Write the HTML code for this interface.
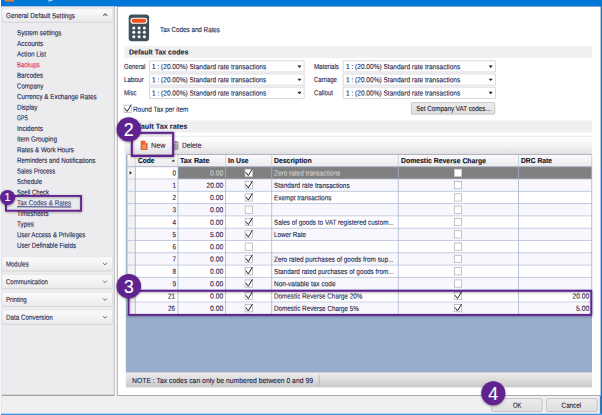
<!DOCTYPE html><html><head><meta charset="utf-8"><title>Settings</title><style>html,body{margin:0;padding:0;background:#fff;}
body{width:602px;height:415px;overflow:hidden;position:relative;font-family:"Liberation Sans",sans-serif;color:#202044;}
svg{position:absolute;left:0;top:0;}
span{position:absolute;white-space:nowrap;line-height:10px;height:10px;font-size:7.3px;-webkit-text-stroke:0.1px;}
.l{transform-origin:0 50%;}.r{transform-origin:100% 50%;}.c{transform-origin:50% 50%;}
.b{font-weight:bold;}</style></head><body>
<svg width="602" height="415" viewBox="0 0 602 415"><defs><linearGradient id="hg" x1="0" y1="0" x2="0" y2="1"><stop offset="0" stop-color="#fbfbfb"/><stop offset="1" stop-color="#eaeaec"/></linearGradient><linearGradient id="bg" x1="0" y1="0" x2="0" y2="1"><stop offset="0" stop-color="#ececec"/><stop offset="1" stop-color="#dedede"/></linearGradient><linearGradient id="tg" x1="0" y1="0" x2="0" y2="1"><stop offset="0" stop-color="#ffffff"/><stop offset="0.5" stop-color="#f4f4f5"/><stop offset="1" stop-color="#dfdfe1"/></linearGradient><linearGradient id="ng" x1="0" y1="0" x2="0" y2="1"><stop offset="0" stop-color="#ededed"/><stop offset="1" stop-color="#c9c9cb"/></linearGradient><linearGradient id="thg" x1="0" y1="0" x2="0" y2="1"><stop offset="0" stop-color="#fbfbfc"/><stop offset="1" stop-color="#ebebee"/></linearGradient></defs>
<rect x="1.00" y="0.00" width="601.00" height="415.00" fill="#f0f0f0" />
<rect x="1.00" y="0.00" width="601.00" height="6.90" fill="#0078d7" />
<rect x="1.00" y="6.10" width="601.00" height="0.80" fill="#1668b6" />
<rect x="4.90" y="0.00" width="9.10" height="1.60" fill="#f07a28" />
<rect x="48.60" y="0.00" width="1.20" height="1.60" fill="#e8f0fa" />
<rect x="50.20" y="0.00" width="2.20" height="0.90" fill="#d0e4f8" />
<rect x="1.00" y="6.60" width="1.20" height="407.00" fill="#f6f6f8" />
<line x1="1.20" y1="6.60" x2="1.20" y2="413.40" stroke="#9cc4ee" stroke-width="0.40"/>
<rect x="600.50" y="6.00" width="1.50" height="409.00" fill="#0078d7" />
<line x1="600.35" y1="6.60" x2="600.35" y2="413.40" stroke="#2a5a94" stroke-width="0.80"/>
<rect x="1.00" y="413.70" width="601.00" height="1.30" fill="#3a92e4" />
<rect x="1.70" y="6.30" width="112.40" height="388.70" fill="#ececef" />
<line x1="114.40" y1="6.30" x2="114.40" y2="395.50" stroke="#a4a4a8" stroke-width="0.80"/>
<line x1="1.70" y1="395.40" x2="114.80" y2="395.40" stroke="#a0a0a4" stroke-width="1.20"/>
<rect x="114.80" y="6.30" width="2.20" height="389.70" fill="#fbfbfb" />
<rect x="2.1" y="9.30" width="110.5" height="13.10" rx="1.4" fill="#c4c4ca"/>
<rect x="2.1" y="8.80" width="110.5" height="13.10" rx="1.4" fill="url(#hg)" stroke="#dcdce0" stroke-width="0.5"/>
<path d="M103.2 15.95 l2.1 -2.1 l2.1 2.1" fill="none" stroke="#6a6a80" stroke-width="1.15"/>
<rect x="2.1" y="257.30" width="110.5" height="14.00" rx="1.4" fill="#c4c4ca"/>
<rect x="2.1" y="256.80" width="110.5" height="14.00" rx="1.4" fill="url(#hg)" stroke="#dcdce0" stroke-width="0.5"/>
<path d="M103 262.90 l2 2 l2 -2" fill="none" stroke="#6a6a80" stroke-width="1.0"/>
<rect x="2.1" y="275.05" width="110.5" height="14.00" rx="1.4" fill="#c4c4ca"/>
<rect x="2.1" y="274.55" width="110.5" height="14.00" rx="1.4" fill="url(#hg)" stroke="#dcdce0" stroke-width="0.5"/>
<path d="M103 280.65 l2 2 l2 -2" fill="none" stroke="#6a6a80" stroke-width="1.0"/>
<rect x="2.1" y="292.80" width="110.5" height="14.00" rx="1.4" fill="#c4c4ca"/>
<rect x="2.1" y="292.30" width="110.5" height="14.00" rx="1.4" fill="url(#hg)" stroke="#dcdce0" stroke-width="0.5"/>
<path d="M103 298.40 l2 2 l2 -2" fill="none" stroke="#6a6a80" stroke-width="1.0"/>
<rect x="2.1" y="310.55" width="110.5" height="14.00" rx="1.4" fill="#c4c4ca"/>
<rect x="2.1" y="310.05" width="110.5" height="14.00" rx="1.4" fill="url(#hg)" stroke="#dcdce0" stroke-width="0.5"/>
<path d="M103 316.15 l2 2 l2 -2" fill="none" stroke="#6a6a80" stroke-width="1.0"/>
<rect x="117.40" y="6.60" width="483.20" height="389.00" fill="#ffffff" />
<line x1="117.30" y1="6.30" x2="117.30" y2="395.80" stroke="#98989c" stroke-width="0.80"/>
<line x1="117.00" y1="395.50" x2="600.50" y2="395.50" stroke="#a0a0a4" stroke-width="0.90"/>
<g transform="translate(128.7 14.55)">
<rect x="0" y="0" width="20.4" height="26.7" rx="3.3" fill="#3f505a"/>
<rect x="1.7" y="3.1" width="17" height="6.2" rx="3.1" fill="#fff"/>
<rect x="2.9" y="4.3" width="14.6" height="3.9" rx="1.95" fill="#ee5320"/>
<g fill="#fff"><circle cx="5.1" cy="13.5" r="1.5"/><circle cx="10.4" cy="13.5" r="1.5"/><circle cx="15.7" cy="13.5" r="1.5"/>
<circle cx="5.1" cy="17.8" r="1.5"/><circle cx="10.4" cy="17.8" r="1.5"/><circle cx="15.7" cy="17.8" r="1.5"/>
<circle cx="5.1" cy="22.1" r="1.5"/><circle cx="10.4" cy="22.1" r="1.5"/><circle cx="15.7" cy="22.1" r="1.5"/></g></g>
<rect x="124.50" y="45.90" width="467.50" height="12.20" fill="#f0f0f0" />
<rect x="149.70" y="60.80" width="154.40" height="11.2" fill="#fff" stroke="#c8c8d0" stroke-width="0.7"/>
<path d="M297.40 65.50 h4.2 l-2.1 2.4 z" fill="#202028"/>
<rect x="343.10" y="60.80" width="152.20" height="11.2" fill="#fff" stroke="#c8c8d0" stroke-width="0.7"/>
<path d="M488.60 65.50 h4.2 l-2.1 2.4 z" fill="#202028"/>
<rect x="149.70" y="73.95" width="154.40" height="11.2" fill="#fff" stroke="#c8c8d0" stroke-width="0.7"/>
<path d="M297.40 78.65 h4.2 l-2.1 2.4 z" fill="#202028"/>
<rect x="343.10" y="73.95" width="152.20" height="11.2" fill="#fff" stroke="#c8c8d0" stroke-width="0.7"/>
<path d="M488.60 78.65 h4.2 l-2.1 2.4 z" fill="#202028"/>
<rect x="149.70" y="87.10" width="154.40" height="11.2" fill="#fff" stroke="#c8c8d0" stroke-width="0.7"/>
<path d="M297.40 91.80 h4.2 l-2.1 2.4 z" fill="#202028"/>
<rect x="343.10" y="87.10" width="152.20" height="11.2" fill="#fff" stroke="#c8c8d0" stroke-width="0.7"/>
<path d="M488.60 91.80 h4.2 l-2.1 2.4 z" fill="#202028"/>
<rect x="124.00" y="105.15" width="7.30" height="7.30" fill="#fff" stroke="#b0b0b8" stroke-width="0.75"/>
<path d="M124.65 108.20 l2.5 3.3 l4.1 -6.8" fill="none" stroke="#22223a" stroke-width="1.0"/>
<rect x="411.40" y="102.60" width="83.40" height="11.60" rx="1.3" fill="url(#bg)" stroke="#b4b4ba" stroke-width="0.7"/>
<rect x="124.50" y="120.40" width="467.50" height="12.10" fill="#f0f0f0" />
<rect x="124.5" y="136.3" width="467.5" height="18" fill="url(#tg)"/>
<line x1="124.50" y1="136.30" x2="592.00" y2="136.30" stroke="#dcdce0" stroke-width="0.60"/>
<g transform="translate(140.4 140.6)"><path d="M0.3 0.2 H4.6 L7.2 2.8 V9.3 H0.3 Z" fill="#e8622c"/><path d="M4.6 0.2 V2.8 H7.2 Z" fill="#f9c4a6"/><path d="M1.8 4.6 H5.7 M1.8 6.1 H5.7 M1.8 7.6 H5.7" stroke="#fbd4be" stroke-width="0.6"/></g>
<g transform="translate(172.6 140.6)"><path d="M0.3 1.9 H6.7 V2.9 H0.3 Z M2.3 0.5 H4.7 V1.8 H2.3 Z" fill="#8c8c90"/><path d="M0.9 3.4 H6.1 L5.7 9.3 H1.3 Z" fill="#a4a4a8"/></g>
<rect x="125.80" y="154.50" width="466.20" height="218.20" fill="#97adcb" />
<rect x="127.20" y="154.50" width="464.60" height="12.20" fill="url(#thg)"/>
<path d="M171.6 161.6 h3.4 l-1.7 -2.2 z" fill="#202028"/>
<rect x="127.20" y="166.70" width="8.10" height="12.30" fill="#f3f3f6" />
<rect x="135.30" y="166.70" width="456.50" height="12.30" fill="#ffffff" />
<rect x="178.00" y="166.70" width="413.80" height="12.30" fill="#808080" />
<rect x="245.15" y="169.20" width="7.30" height="7.30" fill="#fff" stroke="#c8c8c8" stroke-width="0.75"/>
<path d="M245.80 172.25 l2.5 3.3 l4.1 -6.8" fill="none" stroke="#22223a" stroke-width="1.0"/>
<rect x="454.35" y="169.20" width="7.30" height="7.30" fill="#fff" stroke="#c8c8c8" stroke-width="0.75"/>
<rect x="127.20" y="179.00" width="8.10" height="12.30" fill="#f3f3f6" />
<rect x="135.30" y="179.00" width="456.50" height="12.30" fill="#f7f7fd" />
<rect x="245.15" y="181.50" width="7.30" height="7.30" fill="#fff" stroke="#b0b0b8" stroke-width="0.75"/>
<path d="M245.80 184.55 l2.5 3.3 l4.1 -6.8" fill="none" stroke="#22223a" stroke-width="1.0"/>
<rect x="454.35" y="181.50" width="7.30" height="7.30" fill="#fff" stroke="#b0b0b8" stroke-width="0.75"/>
<rect x="127.20" y="191.30" width="8.10" height="12.30" fill="#f3f3f6" />
<rect x="135.30" y="191.30" width="456.50" height="12.30" fill="#ffffff" />
<rect x="245.15" y="193.80" width="7.30" height="7.30" fill="#fff" stroke="#b0b0b8" stroke-width="0.75"/>
<path d="M245.80 196.85 l2.5 3.3 l4.1 -6.8" fill="none" stroke="#22223a" stroke-width="1.0"/>
<rect x="454.35" y="193.80" width="7.30" height="7.30" fill="#fff" stroke="#b0b0b8" stroke-width="0.75"/>
<rect x="127.20" y="203.60" width="8.10" height="12.30" fill="#f3f3f6" />
<rect x="135.30" y="203.60" width="456.50" height="12.30" fill="#f7f7fd" />
<rect x="245.15" y="206.10" width="7.30" height="7.30" fill="#fff" stroke="#b0b0b8" stroke-width="0.75"/>
<rect x="454.35" y="206.10" width="7.30" height="7.30" fill="#fff" stroke="#b0b0b8" stroke-width="0.75"/>
<rect x="127.20" y="215.90" width="8.10" height="12.30" fill="#f3f3f6" />
<rect x="135.30" y="215.90" width="456.50" height="12.30" fill="#ffffff" />
<rect x="245.15" y="218.40" width="7.30" height="7.30" fill="#fff" stroke="#b0b0b8" stroke-width="0.75"/>
<path d="M245.80 221.45 l2.5 3.3 l4.1 -6.8" fill="none" stroke="#22223a" stroke-width="1.0"/>
<rect x="454.35" y="218.40" width="7.30" height="7.30" fill="#fff" stroke="#b0b0b8" stroke-width="0.75"/>
<rect x="127.20" y="228.20" width="8.10" height="12.30" fill="#f3f3f6" />
<rect x="135.30" y="228.20" width="456.50" height="12.30" fill="#f7f7fd" />
<rect x="245.15" y="230.70" width="7.30" height="7.30" fill="#fff" stroke="#b0b0b8" stroke-width="0.75"/>
<path d="M245.80 233.75 l2.5 3.3 l4.1 -6.8" fill="none" stroke="#22223a" stroke-width="1.0"/>
<rect x="454.35" y="230.70" width="7.30" height="7.30" fill="#fff" stroke="#b0b0b8" stroke-width="0.75"/>
<rect x="127.20" y="240.50" width="8.10" height="12.30" fill="#f3f3f6" />
<rect x="135.30" y="240.50" width="456.50" height="12.30" fill="#ffffff" />
<rect x="245.15" y="243.00" width="7.30" height="7.30" fill="#fff" stroke="#b0b0b8" stroke-width="0.75"/>
<rect x="454.35" y="243.00" width="7.30" height="7.30" fill="#fff" stroke="#b0b0b8" stroke-width="0.75"/>
<rect x="127.20" y="252.80" width="8.10" height="12.30" fill="#f3f3f6" />
<rect x="135.30" y="252.80" width="456.50" height="12.30" fill="#f7f7fd" />
<rect x="245.15" y="255.30" width="7.30" height="7.30" fill="#fff" stroke="#b0b0b8" stroke-width="0.75"/>
<path d="M245.80 258.35 l2.5 3.3 l4.1 -6.8" fill="none" stroke="#22223a" stroke-width="1.0"/>
<rect x="454.35" y="255.30" width="7.30" height="7.30" fill="#fff" stroke="#b0b0b8" stroke-width="0.75"/>
<rect x="127.20" y="265.10" width="8.10" height="12.30" fill="#f3f3f6" />
<rect x="135.30" y="265.10" width="456.50" height="12.30" fill="#ffffff" />
<rect x="245.15" y="267.60" width="7.30" height="7.30" fill="#fff" stroke="#b0b0b8" stroke-width="0.75"/>
<path d="M245.80 270.65 l2.5 3.3 l4.1 -6.8" fill="none" stroke="#22223a" stroke-width="1.0"/>
<rect x="454.35" y="267.60" width="7.30" height="7.30" fill="#fff" stroke="#b0b0b8" stroke-width="0.75"/>
<rect x="127.20" y="277.40" width="8.10" height="12.30" fill="#f3f3f6" />
<rect x="135.30" y="277.40" width="456.50" height="12.30" fill="#f7f7fd" />
<rect x="245.15" y="279.90" width="7.30" height="7.30" fill="#fff" stroke="#b0b0b8" stroke-width="0.75"/>
<path d="M245.80 282.95 l2.5 3.3 l4.1 -6.8" fill="none" stroke="#22223a" stroke-width="1.0"/>
<rect x="454.35" y="279.90" width="7.30" height="7.30" fill="#fff" stroke="#b0b0b8" stroke-width="0.75"/>
<rect x="127.20" y="289.70" width="8.10" height="12.30" fill="#f3f3f6" />
<rect x="135.30" y="289.70" width="456.50" height="12.30" fill="#ffffff" />
<rect x="245.15" y="292.20" width="7.30" height="7.30" fill="#fff" stroke="#b0b0b8" stroke-width="0.75"/>
<path d="M245.80 295.25 l2.5 3.3 l4.1 -6.8" fill="none" stroke="#22223a" stroke-width="1.0"/>
<rect x="454.35" y="292.20" width="7.30" height="7.30" fill="#fff" stroke="#b0b0b8" stroke-width="0.75"/>
<path d="M455.00 295.25 l2.5 3.3 l4.1 -6.8" fill="none" stroke="#22223a" stroke-width="1.0"/>
<rect x="127.20" y="302.00" width="8.10" height="12.30" fill="#f3f3f6" />
<rect x="135.30" y="302.00" width="456.50" height="12.30" fill="#f7f7fd" />
<rect x="245.15" y="304.50" width="7.30" height="7.30" fill="#fff" stroke="#b0b0b8" stroke-width="0.75"/>
<path d="M245.80 307.55 l2.5 3.3 l4.1 -6.8" fill="none" stroke="#22223a" stroke-width="1.0"/>
<rect x="454.35" y="304.50" width="7.30" height="7.30" fill="#fff" stroke="#b0b0b8" stroke-width="0.75"/>
<path d="M455.00 307.55 l2.5 3.3 l4.1 -6.8" fill="none" stroke="#22223a" stroke-width="1.0"/>
<line x1="127.20" y1="166.70" x2="591.80" y2="166.70" stroke="#a8aec2" stroke-width="0.80"/>
<line x1="127.20" y1="179.00" x2="591.80" y2="179.00" stroke="#b6c2da" stroke-width="0.70"/>
<line x1="127.20" y1="191.30" x2="591.80" y2="191.30" stroke="#b6c2da" stroke-width="0.70"/>
<line x1="127.20" y1="203.60" x2="591.80" y2="203.60" stroke="#b6c2da" stroke-width="0.70"/>
<line x1="127.20" y1="215.90" x2="591.80" y2="215.90" stroke="#b6c2da" stroke-width="0.70"/>
<line x1="127.20" y1="228.20" x2="591.80" y2="228.20" stroke="#b6c2da" stroke-width="0.70"/>
<line x1="127.20" y1="240.50" x2="591.80" y2="240.50" stroke="#b6c2da" stroke-width="0.70"/>
<line x1="127.20" y1="252.80" x2="591.80" y2="252.80" stroke="#b6c2da" stroke-width="0.70"/>
<line x1="127.20" y1="265.10" x2="591.80" y2="265.10" stroke="#b6c2da" stroke-width="0.70"/>
<line x1="127.20" y1="277.40" x2="591.80" y2="277.40" stroke="#b6c2da" stroke-width="0.70"/>
<line x1="127.20" y1="289.70" x2="591.80" y2="289.70" stroke="#b6c2da" stroke-width="0.70"/>
<line x1="127.20" y1="302.00" x2="591.80" y2="302.00" stroke="#b6c2da" stroke-width="0.70"/>
<line x1="127.20" y1="314.30" x2="591.80" y2="314.30" stroke="#b6c2da" stroke-width="0.70"/>
<line x1="127.20" y1="154.50" x2="591.80" y2="154.50" stroke="#a6a6ae" stroke-width="0.80"/>
<line x1="127.20" y1="166.70" x2="127.20" y2="314.30" stroke="#b8c2d6" stroke-width="0.75"/>
<line x1="127.20" y1="154.50" x2="127.20" y2="166.70" stroke="#c2c6d4" stroke-width="0.70"/>
<line x1="135.30" y1="166.70" x2="135.30" y2="314.30" stroke="#a4b0ca" stroke-width="0.75"/>
<line x1="135.30" y1="154.50" x2="135.30" y2="166.70" stroke="#c2c6d4" stroke-width="0.70"/>
<line x1="178.00" y1="166.70" x2="178.00" y2="314.30" stroke="#a4b0ca" stroke-width="0.75"/>
<line x1="178.00" y1="154.50" x2="178.00" y2="166.70" stroke="#c2c6d4" stroke-width="0.70"/>
<line x1="225.60" y1="166.70" x2="225.60" y2="314.30" stroke="#a4b0ca" stroke-width="0.75"/>
<line x1="225.60" y1="154.50" x2="225.60" y2="166.70" stroke="#c2c6d4" stroke-width="0.70"/>
<line x1="271.70" y1="166.70" x2="271.70" y2="314.30" stroke="#a4b0ca" stroke-width="0.75"/>
<line x1="271.70" y1="154.50" x2="271.70" y2="166.70" stroke="#c2c6d4" stroke-width="0.70"/>
<line x1="398.30" y1="166.70" x2="398.30" y2="314.30" stroke="#a4b0ca" stroke-width="0.75"/>
<line x1="398.30" y1="154.50" x2="398.30" y2="166.70" stroke="#c2c6d4" stroke-width="0.70"/>
<line x1="518.50" y1="166.70" x2="518.50" y2="314.30" stroke="#a4b0ca" stroke-width="0.75"/>
<line x1="518.50" y1="154.50" x2="518.50" y2="166.70" stroke="#c2c6d4" stroke-width="0.70"/>
<line x1="591.80" y1="166.70" x2="591.80" y2="314.30" stroke="#a4b0ca" stroke-width="0.75"/>
<line x1="591.80" y1="154.50" x2="591.80" y2="166.70" stroke="#c2c6d4" stroke-width="0.70"/>
<path d="M129.6 171.05 v3.6 l2.3 -1.8 z" fill="#202028"/>
<rect x="125.8" y="372.7" width="466.2" height="14.7" fill="url(#ng)"/>
<line x1="319.30" y1="375.00" x2="319.30" y2="385.40" stroke="#a8a8ac" stroke-width="0.60"/>
<rect x="491.60" y="398.60" width="50.60" height="12.90" rx="1.3" fill="url(#bg)" stroke="#b4b4ba" stroke-width="0.7"/>
<rect x="546.40" y="398.60" width="50.90" height="12.90" rx="1.3" fill="url(#bg)" stroke="#b4b4ba" stroke-width="0.7"/>
</svg>
<span class="l" style="left:5.80px;top:11px;transform:translateY(0.10px) scaleX(0.868) rotate(0.03deg);">General Default Settings</span>
<span class="l" style="left:16.50px;top:28px;transform:translateY(0.35px) scaleX(0.864) rotate(0.03deg);">System settings</span>
<span class="l" style="left:16.50px;top:38px;transform:translateY(0.98px) scaleX(0.876) rotate(0.03deg);">Accounts</span>
<span class="l" style="left:16.50px;top:49px;transform:translateY(0.60px) scaleX(0.861) rotate(0.03deg);">Action List</span>
<span class="l" style="left:16.50px;top:60px;transform:translateY(0.22px) scaleX(0.814) rotate(0.03deg);color:#e8283c;">Backups</span>
<span class="l" style="left:16.50px;top:70px;transform:translateY(0.85px) scaleX(0.843) rotate(0.03deg);">Barcodes</span>
<span class="l" style="left:16.50px;top:81px;transform:translateY(0.47px) scaleX(0.842) rotate(0.03deg);">Company</span>
<span class="l" style="left:16.50px;top:92px;transform:translateY(0.10px) scaleX(0.864) rotate(0.03deg);">Currency &amp; Exchange Rates</span>
<span class="l" style="left:16.50px;top:102px;transform:translateY(0.72px) scaleX(0.848) rotate(0.03deg);">Display</span>
<span class="l" style="left:16.50px;top:113px;transform:translateY(0.35px) scaleX(0.700) rotate(0.03deg);">GPS</span>
<span class="l" style="left:16.50px;top:123px;transform:translateY(0.97px) scaleX(0.890) rotate(0.03deg);">Incidents</span>
<span class="l" style="left:16.50px;top:134px;transform:translateY(0.60px) scaleX(0.865) rotate(0.03deg);">Item Grouping</span>
<span class="l" style="left:16.50px;top:145px;transform:translateY(0.22px) scaleX(0.859) rotate(0.03deg);">Rates &amp; Work Hours</span>
<span class="l" style="left:16.50px;top:155px;transform:translateY(0.85px) scaleX(0.859) rotate(0.03deg);">Reminders and Notifications</span>
<span class="l" style="left:16.50px;top:166px;transform:translateY(0.47px) scaleX(0.821) rotate(0.03deg);">Sales Process</span>
<span class="l" style="left:16.50px;top:177px;transform:translateY(0.10px) scaleX(0.821) rotate(0.03deg);">Schedule</span>
<span class="l" style="left:16.50px;top:187px;transform:translateY(0.72px) scaleX(0.822) rotate(0.03deg);">Spell Check</span>
<span class="l" style="left:16.50px;top:198px;transform:translateY(0.35px) scaleX(0.869) rotate(0.03deg);color:#3a3a7a;text-decoration:underline;">Tax Codes &amp; Rates</span>
<span class="l" style="left:16.50px;top:208px;transform:translateY(0.97px) scaleX(0.841) rotate(0.03deg);">Timesheets</span>
<span class="l" style="left:16.50px;top:219px;transform:translateY(0.60px) scaleX(0.873) rotate(0.03deg);">Types</span>
<span class="l" style="left:16.50px;top:230px;transform:translateY(0.22px) scaleX(0.843) rotate(0.03deg);">User Access &amp; Privileges</span>
<span class="l" style="left:16.50px;top:240px;transform:translateY(0.85px) scaleX(0.846) rotate(0.03deg);">User Definable Fields</span>
<span class="l" style="left:5.90px;top:259px;transform:translateY(0.60px) scaleX(0.823) rotate(0.03deg);">Modules</span>
<span class="l" style="left:5.90px;top:277px;transform:translateY(0.35px) scaleX(0.828) rotate(0.03deg);">Communication</span>
<span class="l" style="left:5.90px;top:295px;transform:translateY(0.10px) scaleX(0.840) rotate(0.03deg);">Printing</span>
<span class="l" style="left:5.90px;top:312px;transform:translateY(0.85px) scaleX(0.861) rotate(0.03deg);">Data Conversion</span>
<span class="l" style="left:159.70px;top:25px;transform:translateY(0.10px) scaleX(0.860) rotate(0.03deg);">Tax Codes and Rates</span>
<span class="l b" style="left:128.90px;top:47px;transform:translateY(0.50px) scaleX(0.958) rotate(0.03deg);">Default Tax codes</span>
<span class="l" style="left:124.00px;top:61px;transform:translateY(0.90px) scaleX(0.820) rotate(0.03deg);">General</span>
<span class="l" style="left:152.30px;top:62px;transform:translateY(0.10px) scaleX(0.897) rotate(0.03deg);">1 : (20.00%) Standard rate transactions</span>
<span class="l" style="left:313.70px;top:61px;transform:translateY(0.90px) scaleX(0.838) rotate(0.03deg);">Materials</span>
<span class="l" style="left:345.70px;top:62px;transform:translateY(0.10px) scaleX(0.897) rotate(0.03deg);">1 : (20.00%) Standard rate transactions</span>
<span class="l" style="left:124.00px;top:75px;transform:translateY(0.05px) scaleX(0.858) rotate(0.03deg);">Labour</span>
<span class="l" style="left:152.30px;top:75px;transform:translateY(0.25px) scaleX(0.897) rotate(0.03deg);">1 : (20.00%) Standard rate transactions</span>
<span class="l" style="left:313.70px;top:75px;transform:translateY(0.05px) scaleX(0.815) rotate(0.03deg);">Carriage</span>
<span class="l" style="left:345.70px;top:75px;transform:translateY(0.25px) scaleX(0.897) rotate(0.03deg);">1 : (20.00%) Standard rate transactions</span>
<span class="l" style="left:124.00px;top:88px;transform:translateY(0.20px) scaleX(0.833) rotate(0.03deg);">Misc</span>
<span class="l" style="left:152.30px;top:88px;transform:translateY(0.40px) scaleX(0.897) rotate(0.03deg);">1 : (20.00%) Standard rate transactions</span>
<span class="l" style="left:313.70px;top:88px;transform:translateY(0.20px) scaleX(0.836) rotate(0.03deg);">Callout</span>
<span class="l" style="left:345.70px;top:88px;transform:translateY(0.40px) scaleX(0.897) rotate(0.03deg);">1 : (20.00%) Standard rate transactions</span>
<span class="l" style="left:132.90px;top:104px;transform:translateY(0.80px) scaleX(0.876) rotate(0.03deg);">Round Tax per item</span>
<span class="c" style="left:409.70px;top:104px;transform:translateY(0.10px) scaleX(0.858) rotate(0.03deg);color:#202028;">Set Company VAT codes...</span>
<span class="l b" style="left:128.90px;top:121px;transform:translateY(0.70px) scaleX(1.001) rotate(0.03deg);">Default Tax rates</span>
<span class="l" style="left:150.90px;top:140px;transform:translateY(0.70px) scaleX(0.979) rotate(0.03deg);">New</span>
<span class="l" style="left:182.30px;top:140px;transform:translateY(0.70px) scaleX(0.924) rotate(0.03deg);">Delete</span>
<span class="l b" style="left:137.70px;top:156px;transform:translateY(0.10px) scaleX(0.904) rotate(0.03deg);color:#0c0c1c;">Code</span>
<span class="l b" style="left:180.40px;top:156px;transform:translateY(0.10px) scaleX(0.987) rotate(0.03deg);color:#0c0c1c;">Tax Rate</span>
<span class="l b" style="left:228.00px;top:156px;transform:translateY(0.10px) scaleX(0.936) rotate(0.03deg);color:#0c0c1c;">In Use</span>
<span class="l b" style="left:274.10px;top:156px;transform:translateY(0.10px) scaleX(0.939) rotate(0.03deg);color:#0c0c1c;">Description</span>
<span class="l b" style="left:400.70px;top:156px;transform:translateY(0.10px) scaleX(0.940) rotate(0.03deg);color:#0c0c1c;">Domestic Reverse Charge</span>
<span class="l b" style="left:520.90px;top:156px;transform:translateY(0.10px) scaleX(0.921) rotate(0.03deg);color:#0c0c1c;">DRC Rate</span>
<span class="r" style="right:426.40px;top:168px;transform:translateY(0.45px) scaleX(0.874) rotate(0.03deg);">0</span>
<span class="r" style="right:378.80px;top:168px;transform:translateY(0.45px) scaleX(0.929) rotate(0.03deg);color:#d4d4d4;">0.00</span>
<span class="l" style="left:273.90px;top:168px;transform:translateY(0.55px) scaleX(0.883) rotate(0.03deg);color:#d4d4d4;">Zero rated transactions</span>
<span class="r" style="right:426.40px;top:180px;transform:translateY(0.75px) scaleX(0.874) rotate(0.03deg);">1</span>
<span class="r" style="right:378.80px;top:180px;transform:translateY(0.75px) scaleX(0.920) rotate(0.03deg);">20.00</span>
<span class="l" style="left:273.90px;top:180px;transform:translateY(0.85px) scaleX(0.884) rotate(0.03deg);">Standard rate transactions</span>
<span class="r" style="right:426.40px;top:193px;transform:translateY(0.05px) scaleX(0.874) rotate(0.03deg);">2</span>
<span class="r" style="right:378.80px;top:193px;transform:translateY(0.05px) scaleX(0.929) rotate(0.03deg);">0.00</span>
<span class="l" style="left:273.90px;top:193px;transform:translateY(0.15px) scaleX(0.867) rotate(0.03deg);">Exempt transactions</span>
<span class="r" style="right:426.40px;top:205px;transform:translateY(0.35px) scaleX(0.874) rotate(0.03deg);">3</span>
<span class="r" style="right:378.80px;top:205px;transform:translateY(0.35px) scaleX(0.929) rotate(0.03deg);">0.00</span>
<span class="r" style="right:426.40px;top:217px;transform:translateY(0.65px) scaleX(0.874) rotate(0.03deg);">4</span>
<span class="r" style="right:378.80px;top:217px;transform:translateY(0.65px) scaleX(0.929) rotate(0.03deg);">0.00</span>
<span class="l" style="left:273.90px;top:217px;transform:translateY(0.75px) scaleX(0.871) rotate(0.03deg);">Sales of goods to VAT registered custom...</span>
<span class="r" style="right:426.40px;top:229px;transform:translateY(0.95px) scaleX(0.874) rotate(0.03deg);">5</span>
<span class="r" style="right:378.80px;top:229px;transform:translateY(0.95px) scaleX(0.929) rotate(0.03deg);">5.00</span>
<span class="l" style="left:273.90px;top:230px;transform:translateY(0.05px) scaleX(0.857) rotate(0.03deg);">Lower Rate</span>
<span class="r" style="right:426.40px;top:242px;transform:translateY(0.25px) scaleX(0.874) rotate(0.03deg);">6</span>
<span class="r" style="right:378.80px;top:242px;transform:translateY(0.25px) scaleX(0.929) rotate(0.03deg);">0.00</span>
<span class="r" style="right:426.40px;top:254px;transform:translateY(0.55px) scaleX(0.874) rotate(0.03deg);">7</span>
<span class="r" style="right:378.80px;top:254px;transform:translateY(0.55px) scaleX(0.929) rotate(0.03deg);">0.00</span>
<span class="l" style="left:273.90px;top:254px;transform:translateY(0.65px) scaleX(0.878) rotate(0.03deg);">Zero rated purchases of goods from sup...</span>
<span class="r" style="right:426.40px;top:266px;transform:translateY(0.85px) scaleX(0.874) rotate(0.03deg);">8</span>
<span class="r" style="right:378.80px;top:266px;transform:translateY(0.85px) scaleX(0.929) rotate(0.03deg);">0.00</span>
<span class="l" style="left:273.90px;top:266px;transform:translateY(0.95px) scaleX(0.875) rotate(0.03deg);">Standard rated purchases of goods from...</span>
<span class="r" style="right:426.40px;top:279px;transform:translateY(0.15px) scaleX(0.874) rotate(0.03deg);">9</span>
<span class="r" style="right:378.80px;top:279px;transform:translateY(0.15px) scaleX(0.929) rotate(0.03deg);">0.00</span>
<span class="l" style="left:273.90px;top:279px;transform:translateY(0.25px) scaleX(0.892) rotate(0.03deg);">Non-vatable tax code</span>
<span class="r" style="right:426.40px;top:291px;transform:translateY(0.45px) scaleX(0.874) rotate(0.03deg);">21</span>
<span class="r" style="right:378.80px;top:291px;transform:translateY(0.45px) scaleX(0.929) rotate(0.03deg);">0.00</span>
<span class="l" style="left:273.90px;top:291px;transform:translateY(0.55px) scaleX(0.865) rotate(0.03deg);">Domestic Reverse Charge 20%</span>
<span class="r" style="right:12.60px;top:291px;transform:translateY(0.45px) scaleX(0.920) rotate(0.03deg);">20.00</span>
<span class="r" style="right:426.40px;top:303px;transform:translateY(0.75px) scaleX(0.874) rotate(0.03deg);">26</span>
<span class="r" style="right:378.80px;top:303px;transform:translateY(0.75px) scaleX(0.929) rotate(0.03deg);">0.00</span>
<span class="l" style="left:273.90px;top:303px;transform:translateY(0.85px) scaleX(0.866) rotate(0.03deg);">Domestic Reverse Charge 5%</span>
<span class="r" style="right:12.60px;top:303px;transform:translateY(0.75px) scaleX(0.929) rotate(0.03deg);">5.00</span>
<span class="l" style="left:131.50px;top:376px;transform:translateY(0.00px) scaleX(0.936) rotate(0.03deg);">NOTE : Tax codes can only be numbered between 0 and 99</span>
<span class="c" style="left:511.63px;top:400px;transform:translateY(0.75px) scaleX(0.815) rotate(0.03deg);color:#202028;">OK</span>
<span class="c" style="left:560.49px;top:400px;transform:translateY(0.75px) scaleX(0.858) rotate(0.03deg);color:#202028;">Cancel</span>
<svg width="602" height="415" viewBox="0 0 602 415"><defs><filter id="sh" x="-30%" y="-30%" width="160%" height="160%"><feDropShadow dx="0" dy="0.8" stdDeviation="1.1" flood-color="#000" flood-opacity="0.45"/></filter><filter id="sh2" x="-5%" y="-30%" width="110%" height="160%"><feDropShadow dx="0.3" dy="0.7" stdDeviation="0.8" flood-color="#000" flood-opacity="0.35"/></filter></defs>
<rect x="5.95" y="195.95" width="75.10" height="14.80" fill="none" stroke="#61248f" stroke-width="1.90" filter="url(#sh2)"/>
<circle cx="7.60" cy="197.50" r="7.60" fill="#61248f" filter="url(#sh)"/>
<text x="7.60" y="201.37" font-size="10.8" fill="#fff" stroke="#fff" stroke-width="0.15" text-anchor="middle" font-family="Liberation Sans, sans-serif">1</text>
<rect x="131.85" y="132.85" width="41.30" height="23.10" fill="none" stroke="#61248f" stroke-width="2.10" filter="url(#sh2)"/>
<circle cx="128.80" cy="129.40" r="12.20" fill="#61248f" filter="url(#sh)"/>
<text x="128.80" y="135.77" font-size="17.8" fill="#fff" stroke="#fff" stroke-width="0.15" text-anchor="middle" font-family="Liberation Sans, sans-serif">2</text>
<rect x="128.55" y="290.85" width="462.70" height="24.10" fill="none" stroke="#61248f" stroke-width="1.90" filter="url(#sh2)"/>
<circle cx="128.80" cy="286.20" r="12.25" fill="#61248f" filter="url(#sh)"/>
<text x="128.80" y="292.50" font-size="17.6" fill="#fff" stroke="#fff" stroke-width="0.15" text-anchor="middle" font-family="Liberation Sans, sans-serif">3</text>
<circle cx="493.30" cy="393.30" r="12.00" fill="#61248f" filter="url(#sh)"/>
<text x="493.30" y="399.67" font-size="17.8" fill="#fff" stroke="#fff" stroke-width="0.15" text-anchor="middle" font-family="Liberation Sans, sans-serif">4</text>
</svg>
</body></html>
